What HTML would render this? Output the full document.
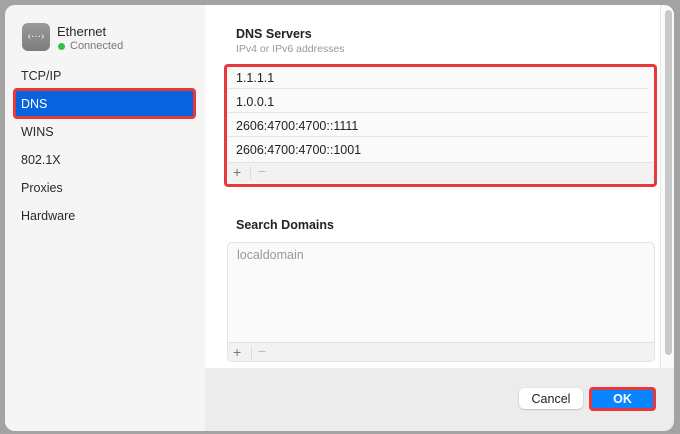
<!DOCTYPE html><html><head><style>
*{margin:0;padding:0;box-sizing:border-box}
body{width:680px;height:434px;background:#a3a3a3;font-family:"Liberation Sans",sans-serif;position:relative;overflow:hidden}
.win{position:absolute;left:5px;top:5px;width:669px;height:426px;border-radius:10px;background:#ececec;overflow:hidden}
.side{position:absolute;left:0;top:0;width:200px;height:426px;background:#f5f5f5}
.main{position:absolute;left:200px;top:0;width:458px;height:363px;background:#fff}
.track{position:absolute;left:655px;top:0;width:14px;height:363px;background:#fafafa;border-left:1px solid #e8e8e8}
.thumb{position:absolute;left:4px;top:5px;width:7px;height:345px;border-radius:4px;background:#c8c8c8}
.t{position:absolute;font-size:12.5px;color:#2a2a2a}
.icon{position:absolute;left:17px;top:18px;width:28px;height:28px;border-radius:6px;background:linear-gradient(#9a9a9a,#7e7e7e);color:#fff;font-size:10px;text-align:center;line-height:27px}
.row{position:absolute;left:227px;width:421px;height:24px;border-bottom:1px solid #e6e6e6;font-size:12.5px;color:#222;padding:6px 0 0 9px}
.red{position:absolute;border:3px solid #e8383b;border-radius:4px}
.btn{position:absolute;border-radius:5px;font-size:12.5px;text-align:center}
</style></head><body>
<div class="win">
<div class="side">
<div class="icon">‹···›</div>
<div class="t" style="left:52px;top:19px;font-size:13px">Ethernet</div>
<div style="position:absolute;left:53px;top:38px;width:7px;height:7px;border-radius:50%;background:#30c142"></div>
<div class="t" style="left:65px;top:35px;font-size:11px;color:#777">Connected</div>
<div class="t" style="left:16px;top:64px">TCP/IP</div>
<div class="red" style="left:8px;top:83px;width:183px;height:31px;background:#0864de"></div>
<div class="t" style="left:16px;top:92px;color:#fff">DNS</div>
<div class="t" style="left:16px;top:120px">WINS</div>
<div class="t" style="left:16px;top:148px">802.1X</div>
<div class="t" style="left:16px;top:176px">Proxies</div>
<div class="t" style="left:16px;top:204px">Hardware</div>
</div>
<div class="main"></div>
<div class="track"><div class="thumb"></div></div>
</div>
<div class="t" style="left:236px;top:27px;font-weight:bold;font-size:12.5px;color:#222">DNS Servers</div>
<div class="t" style="left:236px;top:43px;font-size:10.5px;color:#999">IPv4 or IPv6 addresses</div>
<div style="position:absolute;left:225px;top:65px;width:432px;height:121px;background:#fafafa"></div>
<div class="row" style="top:65px;left:227px">1.1.1.1</div>
<div class="row" style="top:89px">1.0.0.1</div>
<div class="row" style="top:113px">2606:4700:4700::1111</div>
<div class="row" style="top:137px;border-bottom:none">2606:4700:4700::1001</div>
<div style="position:absolute;left:228px;top:162px;width:426px;height:21px;background:#f2f2f2;border-top:1px solid #e2e2e2;font-size:14px;color:#777"><span style="position:absolute;left:5px;top:1px">+</span><span style="position:absolute;left:22px;top:3px;width:1px;height:14px;background:#ddd"></span><span style="position:absolute;left:30px;top:0;color:#bbb">−</span></div>
<div class="red" style="left:224px;top:64px;width:433px;height:123px"></div>
<div class="t" style="left:236px;top:218px;font-weight:bold;color:#222">Search Domains</div>
<div style="position:absolute;left:227px;top:242px;width:428px;height:120px;border:1px solid #e4e4e4;border-radius:5px;background:#fafafa;overflow:hidden">
<div class="t" style="left:9px;top:5px;color:#999">localdomain</div>
<div style="position:absolute;left:0;top:99px;width:428px;height:21px;background:#f2f2f2;border-top:1px solid #e2e2e2;font-size:14px;color:#777"><span style="position:absolute;left:5px;top:1px">+</span><span style="position:absolute;left:23px;top:3px;width:1px;height:14px;background:#ddd"></span><span style="position:absolute;left:30px;top:0;color:#bbb">−</span></div>
</div>
<div class="btn" style="left:519px;top:388px;width:64px;height:21px;background:#fff;box-shadow:0 0.5px 1.5px rgba(0,0,0,.3);padding-top:4px;color:#222">Cancel</div>
<div class="red" style="left:589px;top:387px;width:67px;height:24px;background:#0a84ff;border-width:3px"></div>
<div class="t" style="left:589px;top:392px;width:67px;text-align:center;color:#fff;font-weight:bold;font-size:12.5px">OK</div>
</body></html>
